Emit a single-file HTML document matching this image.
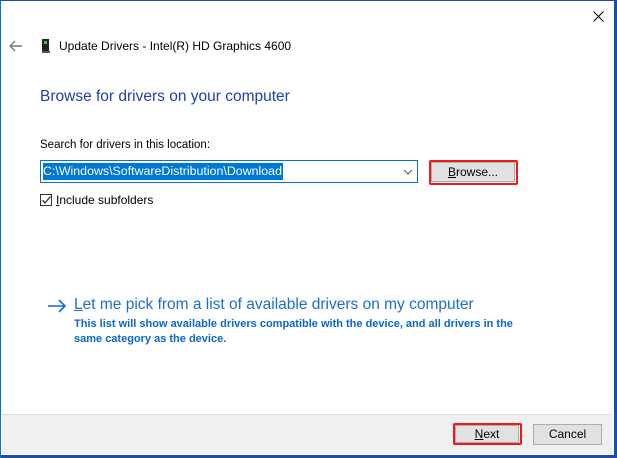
<!DOCTYPE html>
<html><head><meta charset="utf-8"><style>
body{margin:0;width:617px;height:458px;position:relative;overflow:hidden;background:#1a4fa8;font-family:"Liberation Sans",sans-serif;}
.win{position:absolute;left:1px;top:1px;width:613px;height:454px;background:#fff;}
.lb{position:absolute;left:0;top:0;width:1px;height:458px;background:#0a6fd6}
.t{position:absolute;white-space:nowrap;}
.footer{position:absolute;left:2px;top:414px;width:610px;height:39px;background:#f0f0f0;border-top:1px solid #dfdfdf;}
.btn{position:absolute;background:#e1e1e1;border:1px solid #adadad;font-size:12px;text-align:center;color:#000;box-sizing:border-box;}
.red{position:absolute;border:2px solid #f01818;border-radius:2px;box-sizing:border-box;}
</style></head><body>
<div class="lb"></div>
<div class="win"></div>
<svg style="position:absolute;left:593px;top:11px" width="11" height="11"><path d="M0.5 0.5L10.5 10.5M10.5 0.5L0.5 10.5" stroke="#000" stroke-width="1"/></svg>
<svg style="position:absolute;left:9px;top:40px" width="14" height="12"><path d="M1 6H13M1 6L6 1M1 6L6 11" stroke="#777" stroke-width="1.4" fill="none"/></svg>
<svg style="position:absolute;left:42px;top:39px" width="8" height="14"><rect x="0" y="0" width="7" height="13" fill="#222"/><rect x="2" y="2" width="3" height="3" fill="#2fd02f"/><rect x="0" y="12" width="8" height="2" fill="#555"/></svg>
<div class="t" style="left:59px;top:39px;font-size:12px;color:#000">Update Drivers - Intel(R) HD Graphics 4600</div>
<div class="t" style="left:40px;top:88px;font-size:15.5px;color:#1f40b0">Browse for drivers on your computer</div>
<div class="t" style="left:40px;top:139px;font-size:11.5px;color:#000">Search for drivers in this location:</div>
<div style="position:absolute;left:40px;top:160px;width:378px;height:23px;border:1px solid #0a6fd6;box-sizing:border-box;"></div>
<div class="t" style="left:43px;top:163px;height:17px;padding-right:1px;background:#0078d7;color:#fff;font-size:12.4px;line-height:17px;">C:\Windows\SoftwareDistribution\Download</div>
<svg style="position:absolute;left:403px;top:169px" width="10" height="6"><path d="M1 1L5 5L9 1" stroke="#555" fill="none"/></svg>
<div class="btn" style="left:431px;top:162px;width:84px;height:20px;line-height:18px"><u>B</u>rowse...</div>
<div class="red" style="left:429px;top:160px;width:89px;height:25px"></div>
<div style="position:absolute;left:40px;top:194px;width:12px;height:12px;border:1px solid #333;box-sizing:border-box"></div>
<svg style="position:absolute;left:41px;top:195px" width="11" height="10"><path d="M1.5 5L4 8L9.5 1.5" stroke="#222" stroke-width="1.2" fill="none"/></svg>
<div class="t" style="left:56px;top:193px;font-size:12px;color:#000"><u>I</u>nclude subfolders</div>
<svg style="position:absolute;left:47px;top:299px" width="20" height="14"><path d="M1 7H18M12 1L18 7L12 13" stroke="#0a6fd6" stroke-width="1.6" fill="none"/></svg>
<div class="t" style="left:74px;top:296px;font-size:15.5px;color:#1a6fd0"><u>L</u>et me pick from a list of available drivers on my computer</div>
<div class="t" style="left:74px;top:317px;font-size:11px;line-height:15px;color:#0a66d0;font-weight:bold;">This list will show available drivers compatible with the device, and all drivers in the<br>same category as the device.</div>
<div class="footer"></div>
<div class="btn" style="left:455px;top:425px;width:64px;height:18px;line-height:16px"><u>N</u>ext</div>
<div class="red" style="left:453px;top:423px;width:69px;height:22px"></div>
<div class="btn" style="left:533px;top:424px;width:69px;height:21px;line-height:19px">Cancel</div>
</body></html>
